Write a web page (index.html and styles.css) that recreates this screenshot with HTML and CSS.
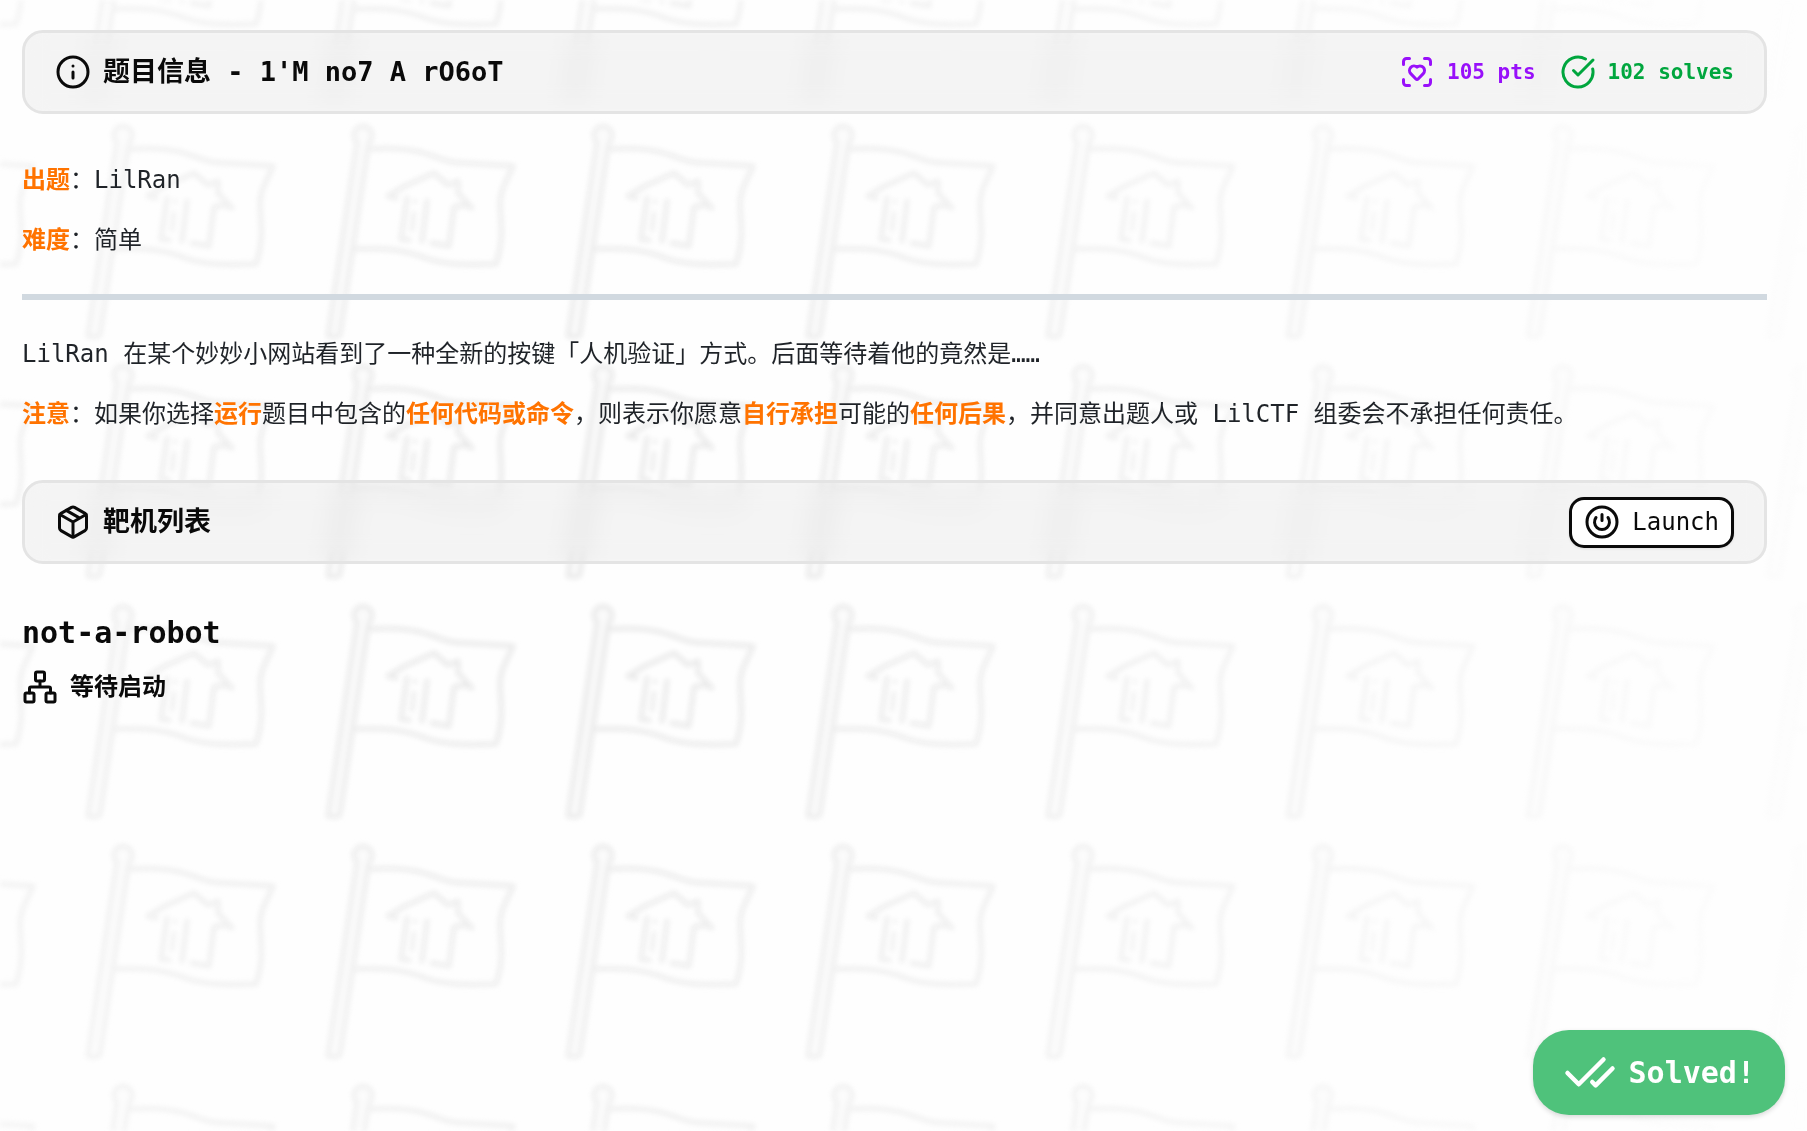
FILE: index.html
```html
<!DOCTYPE html>
<html lang="zh-CN">
<head>
  <meta charset="UTF-8" />
  <meta name="viewport" content="width=device-width, initial-scale=1.0" />
  <title>1'M no7 A rO6oT</title>
  <link rel="stylesheet" href="styles.css">
</head>
<body>

  <svg class="flag-bg" width="100%" height="100%" aria-hidden="true">
    <defs>
      <pattern id="flags" x="80" y="110" width="240" height="240" patternUnits="userSpaceOnUse">
        <g fill="none" stroke="#ebebeb" stroke-width="5" stroke-linejoin="round" stroke-linecap="round">
          <path d="M37 32 A9 9 0 1 1 50 31 L48 37 L20 224 Q19 228 8 226 Z" fill="#fafafa" />
          <path d="M51 39 C70 38 92 39 107 44 C120 48 128 53 145 53 L193 56 C185 75 180 80 180 95 C181 115 184 130 176 154 C145 155 125 155 105 148 C85 140 70 138 35 139" />
          <path d="M76 88 L68 86 L85 76 L114 63 L128 75 L138 71 L138 83 L152 98 L143 95 L134 97 L129 136 L112 133" />
          <path d="M87 88 L81 129 L89 130 M107 91 L102 131" />
          <path d="M95 91 V92 M94 103 L92 120" stroke-width="4" />
        </g>
      </pattern>
      <filter id="soft" x="0" y="0" width="100%" height="100%">
        <feGaussianBlur stdDeviation="2.4" />
      </filter>
    </defs>
    <rect width="100%" height="100%" fill="url(#flags)" filter="url(#soft)" />
  </svg>

  <main class="challenge">
    <header class="card">
      <svg class="icon" viewBox="0 0 24 24"><circle cx="12" cy="12" r="10" /><path d="M12 16v-4M12 8h.01" /></svg>
      <h1>题目信息 - 1'M no7 A rO6oT</h1>
      <div class="stats">
        <span class="stat points">
          <svg class="icon" viewBox="0 0 24 24"><path d="M17 3h2a2 2 0 0 1 2 2v2M21 17v2a2 2 0 0 1-2 2h-2M7 21H5a2 2 0 0 1-2-2v-2M3 7V5a2 2 0 0 1 2-2h2" /><path d="M7.828 13.07A3 3 0 0 1 12 8.764a3 3 0 0 1 5.004 2.224 3 3 0 0 1-.832 2.083l-3.447 3.62a1 1 0 0 1-1.45-.001z" /></svg>
          105 pts
        </span>
        <span class="stat solves">
          <svg class="icon" viewBox="0 0 24 24"><path d="M21.801 10A10 10 0 1 1 17 3.335" /><path d="m9 11 3 3L22 4" /></svg>
          102 solves
        </span>
      </div>
    </header>

    <article class="description">
      <p><strong>出题</strong>：LilRan</p>
      <p><strong>难度</strong>：简单</p>
      <hr>
      <p>LilRan 在某个妙妙小网站看到了一种全新的按键「人机验证」方式。后面等待着他的竟然是……</p>
      <p><strong>注意</strong>：如果你选择<strong>运行</strong>题目中包含的<strong>任何代码或命令</strong>，则表示你愿意<strong>自行承担</strong>可能的<strong>任何后果</strong>，并同意出题人或 LilCTF 组委会不承担任何责任。</p>
    </article>

    <section>
      <div class="card">
        <svg class="icon" viewBox="0 0 24 24"><path d="M11 21.73a2 2 0 0 0 2 0l7-4A2 2 0 0 0 21 16V8a2 2 0 0 0-1-1.73l-7-4a2 2 0 0 0-2 0l-7 4A2 2 0 0 0 3 8v8a2 2 0 0 0 1 1.73z" /><path d="M12 22V12M3.3 7 12 12l8.7-5M7.5 4.27l9 5.15" /></svg>
        <h2>靶机列表</h2>
        <button type="button" class="launch">
          <svg class="icon" viewBox="0 0 24 24"><circle cx="12" cy="12" r="10" /><path d="M12 7v4M8 9a5 5 0 1 0 8 0" /></svg>
          Launch
        </button>
      </div>

      <div class="container-item">
        <h3>not-a-robot</h3>
        <div class="status">
          <svg class="icon" viewBox="0 0 24 24"><rect x="16" y="16" width="6" height="6" rx="1" /><rect x="2" y="16" width="6" height="6" rx="1" /><rect x="9" y="2" width="6" height="6" rx="1" /><path d="M5 16v-3a1 1 0 0 1 1-1h12a1 1 0 0 1 1 1v3M12 12V8" /></svg>
          等待启动
        </div>
      </div>
    </section>
  </main>

  <div class="solved-badge">
    <svg viewBox="0 0 24 24"><path d="M18 6 7 17l-5-5M22 10l-7.5 7.5L13 16" /></svg>
    Solved!
  </div>

</body>
</html>
```
FILE: styles.css
```css
* {
  box-sizing: border-box;
}

body {
  margin: 0;
  min-height: 100vh;
  background-color: #fefefe;
  color: #0a0a0a;
  font-family: "DejaVu Sans Mono", "Noto Sans CJK SC", monospace;
  font-size: 24px;
  line-height: 36px;
}

.flag-bg {
  position: fixed;
  inset: 0;
  z-index: -1;
  mask-image: radial-gradient(ellipse 1350px 1400px at 32% 50%, #000 10%, transparent 100%);
}

.challenge {
  padding: 30px 40px 30px 22px;
}

.icon {
  width: 36px;
  height: 36px;
  flex-shrink: 0;
}

svg.icon,
.solved-badge svg {
  fill: none;
  stroke: currentColor;
  stroke-width: 2;
  stroke-linecap: round;
  stroke-linejoin: round;
}

.card {
  display: flex;
  align-items: center;
  gap: 12px;
  height: 84px;
  padding: 0 30px;
  border: 3px solid #e4e4e4;
  border-radius: 21px;
  background-color: rgba(0, 0, 0, 0.04);
  backdrop-filter: blur(12px);
}

h1,
h2 {
  margin: 0;
  font-size: 27px;
  line-height: 42px;
}

.stats {
  display: flex;
  gap: 24px;
  margin-left: auto;
}

.stat {
  display: flex;
  align-items: center;
  gap: 12px;
  font-size: 21px;
  font-weight: bold;
}

.points {
  color: #9810fa;
}

.solves {
  color: #00a63e;
}

.description {
  margin: 48px 0;
  color: #1f2328;
}

.description p {
  margin: 0 0 24px;
}

.description p:last-child {
  margin-bottom: 0;
}

.description strong {
  color: #ff7300;
}

.description hr {
  height: 6px;
  margin: 36px 0;
  border: 0;
  background-color: #d1d9e0;
}

.launch {
  display: flex;
  align-items: center;
  gap: 12px;
  height: 51px;
  margin-left: auto;
  padding: 0 12px;
  border: 3px solid #0a0a0a;
  border-radius: 15px;
  background-color: #fff;
  color: #0a0a0a;
  font: inherit;
  box-shadow: 0 1px 3px rgba(0, 0, 0, 0.1);
  cursor: pointer;
}

.container-item {
  margin-top: 48px;
}

h3 {
  margin: 0 0 15px;
  font-size: 30px;
  line-height: 42px;
}

.status {
  display: flex;
  align-items: center;
  gap: 12px;
  font-weight: bold;
}

.solved-badge {
  position: fixed;
  right: 22px;
  bottom: 16px;
  display: flex;
  align-items: center;
  gap: 12px;
  height: 85px;
  padding: 0 30px;
  border-radius: 36px;
  background-color: #4fc27b;
  color: #fff;
  font-size: 30px;
  font-weight: bold;
  box-shadow: 0 2px 5px rgba(0, 0, 0, 0.15);
}

.solved-badge svg {
  width: 54px;
  height: 54px;
}
```
